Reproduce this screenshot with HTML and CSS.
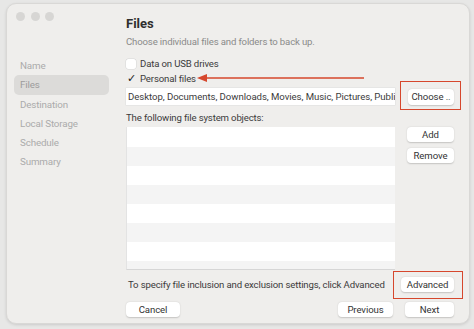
FILE: index.html
```html
<!DOCTYPE html>
<html>
<head>
<meta charset="utf-8">
<link rel="stylesheet" href="styles.css">
</head>
<body>
<div class="window">
  <aside class="sidebar">
    <div class="lights"><span></span><span></span><span></span></div>
    <ul class="steps">
      <li>Name</li>
      <li class="active">Files</li>
      <li>Destination</li>
      <li>Local Storage</li>
      <li>Schedule</li>
      <li>Summary</li>
    </ul>
  </aside>
  <main class="main">
    <h1 class="title">Files</h1>
    <p class="subtitle">Choose individual files and folders to back up.</p>
    <label class="check"><span class="box"></span>Data on USB drives</label>
    <label class="check"><span class="tick">✓</span>Personal files</label>
    <div class="row field-row">
      <div class="field">Desktop, Documents, Downloads, Movies, Music, Pictures, Public</div>
      <button class="btn choose">Choose ..</button>
    </div>
    <p class="label">The following file system objects:</p>
    <div class="row list-row">
      <div class="list">
        <div class="r"></div><div class="r alt"></div><div class="r"></div><div class="r alt"></div><div class="r"></div><div class="r alt"></div><div class="r"></div><div class="r alt"></div>
      </div>
      <div class="side">
        <button class="btn">Add</button>
        <button class="btn">Remove</button>
      </div>
    </div>
    <div class="row adv-row">
      <p class="hint">To specify file inclusion and exclusion settings, click Advanced</p>
      <button class="btn adv">Advanced</button>
    </div>
    <div class="row footer">
      <button class="btn cancel">Cancel</button>
      <div class="nav">
        <button class="btn prev">Previous</button>
        <button class="btn next">Next</button>
      </div>
    </div>
  </main>
  <div class="mark mark-choose"></div>
  <div class="mark mark-adv"></div>
  <svg class="arrow" width="170" height="10" viewBox="0 0 170 10">
    <line x1="8" y1="5" x2="167" y2="5" stroke="#d6472d" stroke-width="1.6"/>
    <polygon points="0,5 10,1 10,9" fill="#d6472d"/>
  </svg>
</div>
</body>
</html>
```

FILE: styles.css
```css
* { box-sizing: border-box; }
html, body { margin: 0; padding: 0; }
body {
  width: 474px;
  height: 329px;
  background: #e7e7e6;
  font-family: Roboto, "Noto Sans", sans-serif;
  font-size: 9.6px;
  letter-spacing: -0.15px;
  color: #3b3b3b;
  overflow: hidden;
}
.window {
  position: relative;
  margin: 3px 0 0 6px;
  width: 464px;
  height: 321px;
  background: #efeeec;
  border: 1px solid #d9d8d6;
  border-radius: 10px;
  box-shadow: 0 1px 3px rgba(0,0,0,0.12);
  display: flex;
}
.sidebar {
  flex: none;
  width: 109px;
  padding: 4px 7px 0 7px;
}
.lights {
  display: flex;
  gap: 5.5px;
  padding-left: 2px;
  height: 48px;
}
.lights span {
  width: 9px;
  height: 9px;
  border-radius: 50%;
  background: #d7d6d4;
  margin-top: 4px;
}
.steps {
  list-style: none;
  margin: 0;
  padding: 0;
}
.steps li {
  height: 19.3px;
  line-height: 19.3px;
  padding-left: 6px;
  color: #ababab;
  border-radius: 5px;
  font-size: 9.8px;
}
.steps li.active {
  background: #dcdbd9;
  color: #9c9c9c;
}
.main {
  flex: 1;
  min-width: 0;
  padding: 12px 15px 0 10px;
  display: flex;
  flex-direction: column;
}
.title {
  margin: 0;
  font-size: 13px;
  font-weight: 700;
  letter-spacing: 0;
  color: #2e2e2e;
  line-height: 16px;
}
.subtitle {
  margin: 3px 0 0 0;
  line-height: 14px;
  color: #8a8a8a;
}
.check {
  display: flex;
  align-items: center;
  height: 15px;
  gap: 4px;
}
.subtitle + .check { margin-top: 7px; }
.box {
  width: 10px;
  height: 10px;
  background: #fff;
  border-radius: 2.5px;
  box-shadow: 0 0 0 0.5px #d5d5d5;
}
.tick {
  width: 10px;
  font-size: 11px;
  color: #222;
  text-align: center;
}
.row { display: flex; }
.field-row {
  margin-top: 2px;
  align-items: center;
  gap: 13px;
}
.field {
  width: 269px;
  flex: none;
  height: 17px;
  line-height: 17px;
  background: #fff;
  padding-left: 2px;
  white-space: nowrap;
  overflow: hidden;
  letter-spacing: -0.05px;
  box-shadow: 0 0 0 0.5px #dedede;
}
.btn {
  font-family: inherit;
  font-size: 9.6px;
  letter-spacing: -0.1px;
  color: #333;
  background: #fff;
  border: none;
  border-radius: 4px;
  box-shadow: 0 0.5px 1.5px rgba(0,0,0,0.18);
  height: 15px;
  padding: 0;
  line-height: 15px;
  flex: none;
}
.choose { width: 46px; height: 16px; }
.label {
  margin: 6px 0 0 0;
  line-height: 14px;
}
.list-row {
  margin-top: 2px;
  gap: 12px;
}
.list {
  width: 269px;
  flex: none;
  height: 143px;
  background: #fff;
  border-bottom: 1px solid #d6d6d6;
  border-left: 1px solid #e3e3e3;
  padding-top: 1px;
  overflow: hidden;
}
.list .r { height: 19px; }
.list .r.alt { background: #f4f4f4; }
.side {
  display: flex;
  flex-direction: column;
  gap: 6px;
  width: 47px;
}
.side .btn { width: 47px; }
.adv-row {
  margin-top: 7px;
  align-items: center;
  justify-content: space-between;
}
.hint { margin: 0 0 0 2px; line-height: 14px; white-space: nowrap; }
.adv { width: 53px; }
.footer {
  margin-top: 10px;
  justify-content: space-between;
}
.cancel { width: 54px; }
.nav { display: flex; gap: 12px; }
.prev { width: 55px; }
.next { width: 49px; }
.mark {
  position: absolute;
  border: 1.5px solid #d6472d;
}
.mark-choose { left: 393px; top: 77px; width: 61px; height: 29px; }
.mark-adv { left: 386px; top: 267px; width: 70px; height: 28px; }
.arrow {
  position: absolute;
  left: 190px;
  top: 69px;
}
```
